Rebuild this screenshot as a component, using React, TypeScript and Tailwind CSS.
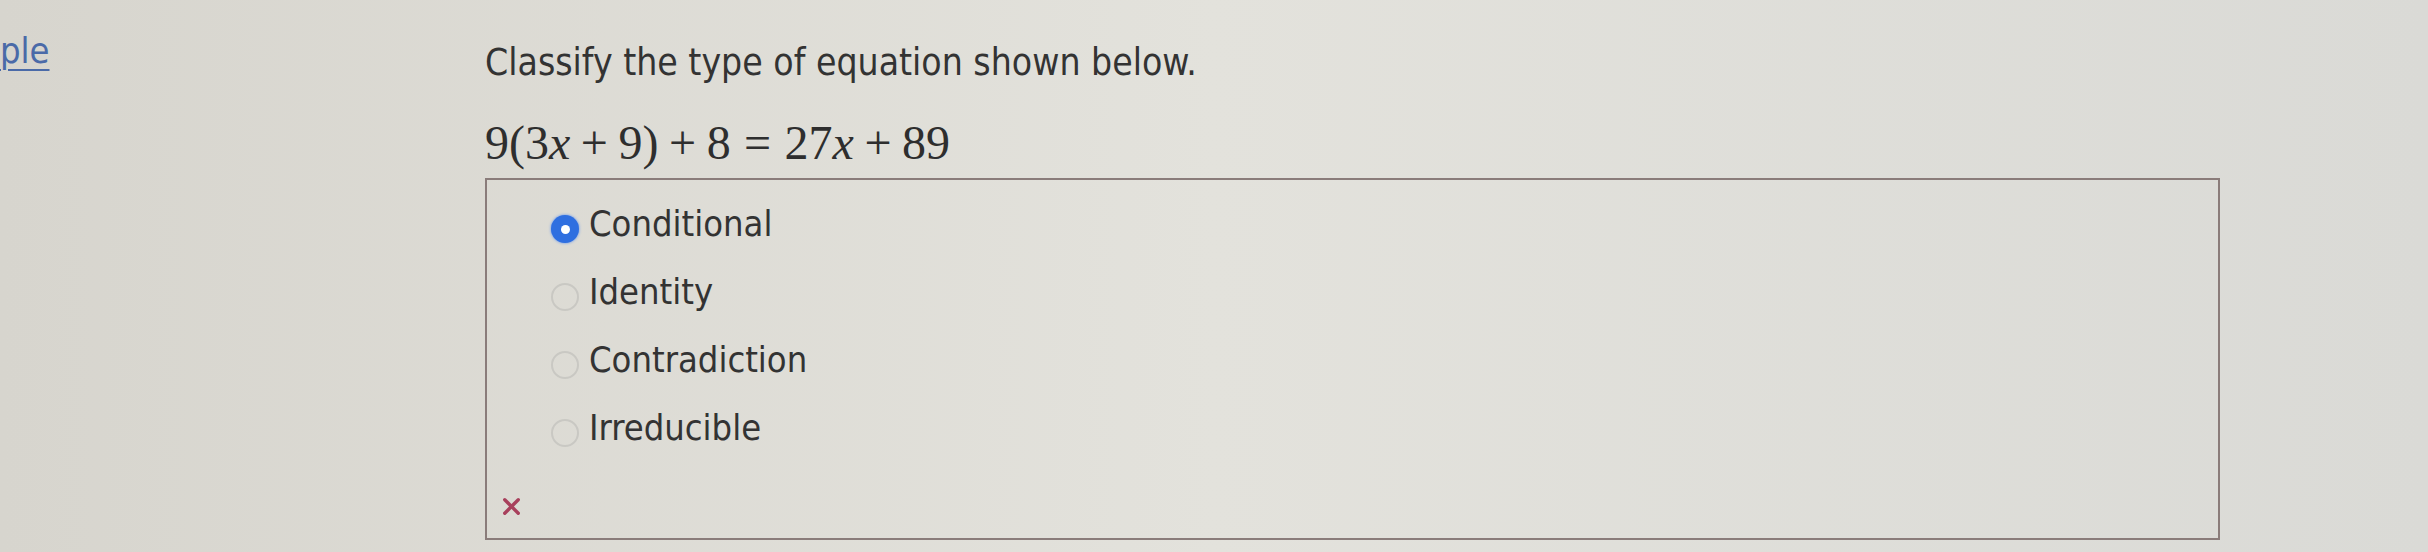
import { X } from "lucide-react"

const options = ["Conditional", "Identity", "Contradiction", "Irreducible"]

const Radio = ({ checked }: { checked: boolean }) =>
  checked ? (
    <span className="mt-[11px] flex h-[28px] w-[28px] shrink-0 items-center justify-center rounded-full bg-[#2f6fe0] shadow-[0_0_3px_#5a8ff0]">
      <span className="h-[9px] w-[9px] rounded-full bg-white" />
    </span>
  ) : (
    <span className="mt-[11px] h-[28px] w-[28px] shrink-0 rounded-full border-2 border-[#c9c8c3]" />
  )

export default function App() {
  return (
    <div className="flex h-[552px] w-[2428px] overflow-hidden bg-linear-to-r from-[#d7d5ce] via-[#e3e2dc] to-[#dadad6] font-['DejaVu_Sans_Condensed','DejaVu_Sans',sans-serif] text-[#333333]">
      {/* left nav, cut off */}
      <div className="w-[485px] shrink-0 pt-[31px]">
        <a className="block text-[36px] leading-[40px] text-[#4a6aa8] underline decoration-2 underline-offset-[6px]">
          ple
        </a>
      </div>

      <div className="flex-1 pt-[40px]">
        <p className="text-[37px] leading-[46px]">Classify the type of equation shown below.</p>

        <div className="mt-[29px] flex items-baseline font-['Liberation_Serif',serif] text-[48px] leading-[56px] text-[#2e2e2e]">
          <span>9(3</span>
          <span className="italic">x</span>
          <span className="mx-[0.22em]">+</span>
          <span>9)</span>
          <span className="mx-[0.22em]">+</span>
          <span>8</span>
          <span className="mx-[0.28em]">=</span>
          <span>27</span>
          <span className="italic">x</span>
          <span className="mx-[0.22em]">+</span>
          <span>89</span>
        </div>

        <div className="mt-[7px] h-[362px] w-[1735px] border-2 border-[#8a7c7a]">
          <div className="flex flex-col gap-[28px] pl-[64px] pt-[24px]">
            {options.map((o, i) => (
              <label key={o} className="flex items-start gap-[10px] text-[36px] leading-[40px]">
                <Radio checked={i === 0} />
                <span>{o}</span>
              </label>
            ))}
          </div>
          <div className="mt-[45px] pl-[11px]">
            <X size={27} strokeWidth={3} className="text-[#a8405c]" />
          </div>
        </div>
      </div>
    </div>
  )
}
